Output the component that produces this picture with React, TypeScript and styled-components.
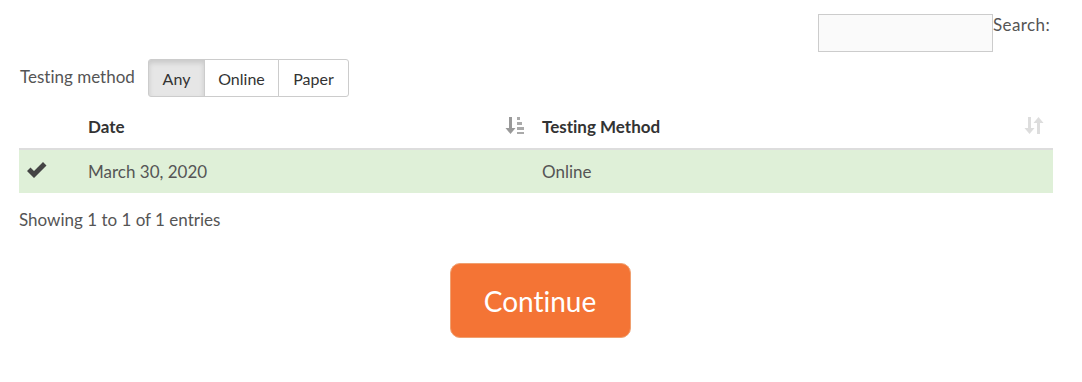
import styled, { createGlobalStyle } from "styled-components"

const GlobalStyle = createGlobalStyle`
  html, body {
    margin: 0;
    padding: 0;
    background: #fff;
  }
  body {
    font-family: 'Lato', 'Open Sans', sans-serif;
    font-size: 17px;
    color: #555;
    font-variant-ligatures: none;
  }
  button, input {
    font-variant-ligatures: none;
  }
`

const Page = styled.div`
  padding: 14px 29px 0 19px;
`

const SearchRow = styled.div`
  display: flex;
  justify-content: flex-end;
  align-items: flex-start;
`

const SearchInput = styled.input`
  width: 175px;
  height: 38px;
  box-sizing: border-box;
  border: 1px solid #ccc;
  background: #fafafa;
  margin: 0;
`

const SearchLabel = styled.label`
  font-size: 17px;
  color: #555;
  margin-top: 0;
  width: 60px;
  letter-spacing: 0.4px;
`

const FilterRow = styled.div`
  display: flex;
  align-items: center;
  margin-top: 7px;
`

const FilterLabel = styled.span`
  font-size: 17px;
  color: #555;
  margin-top: -4px;
  margin-left: 1px;
  width: 128px;
`

const Group = styled.div`
  display: flex;
`

const GroupButton = styled.button<{ $active?: boolean; $w: number }>`
  width: ${p => p.$w}px;
  height: 38px;
  box-sizing: border-box;
  border: 1px solid #ccc;
  margin-left: -1px;
  background: ${p => (p.$active ? "#e6e6e6" : "#fff")};
  box-shadow: ${p => (p.$active ? "inset 0 3px 5px rgba(0,0,0,0.125)" : "none")};
  font-family: inherit;
  font-size: 16px;
  color: #333;
  padding: 0;
  &:first-child {
    margin-left: 0;
    border-radius: 3px 0 0 3px;
  }
  &:last-child {
    border-radius: 0 3px 3px 0;
  }
`

const Table = styled.table`
  width: 100%;
  border-collapse: collapse;
  margin-top: 8px;
`

const HeadCell = styled.th<{ $w?: string }>`
  width: ${p => p.$w ?? "auto"};
  text-align: left;
  font-weight: 700;
  font-size: 17px;
  color: #333;
  height: 43px;
  padding: 0 8px;
  border-bottom: 2px solid #ddd;
  position: relative;
`

const SortIcon = styled.span`
  position: absolute;
  right: 9px;
  top: 11px;
  display: flex;
`

const Row = styled.tr`
  background: #dff0d8;
`

const Cell = styled.td`
  height: 43px;
  padding: 0 8px;
  font-size: 17px;
  color: #555;
`

const Info = styled.div`
  margin-top: 16px;
  font-size: 17px;
  color: #555;
`

const ButtonWrap = styled.div`
  display: flex;
  justify-content: center;
  margin-top: 33px;
`

const ContinueButton = styled.button`
  width: 181px;
  height: 75px;
  border: 1px solid #f0a070;
  border-radius: 10px;
  background: #f47435;
  color: #fff;
  font-family: inherit;
  font-size: 28px;
  margin-left: 8px;
`

const SortAsc = () => (
  <svg width="20" height="20" viewBox="0 0 20 20">
    <rect x="4" y="1" width="3" height="12" fill="#999" />
    <polygon points="0.5,12 10.5,12 5.5,18" fill="#999" />
    <rect x="12" y="1" width="3" height="3" fill="#aaa" />
    <rect x="12" y="6" width="5" height="3" fill="#aaa" />
    <rect x="12" y="11" width="7" height="3" fill="#aaa" />
    <rect x="12" y="16" width="7" height="2" fill="#aaa" />
  </svg>
)

const SortBoth = () => (
  <svg width="20" height="20" viewBox="0 0 20 20">
    <rect x="4" y="1" width="3" height="12" fill="#ddd" />
    <polygon points="0.5,12 10.5,12 5.5,18" fill="#ddd" />
    <rect x="13" y="6" width="3" height="12" fill="#ddd" />
    <polygon points="9.5,7 19.5,7 14.5,1" fill="#ddd" />
  </svg>
)

const Check = () => (
  <svg width="20" height="16" viewBox="0 0 20 16">
    <polygon points="0,9 3.5,5.5 7,9 16,0 19.5,3.5 7,16" fill="#444" />
  </svg>
)

export default function App() {
  return (
    <>
      <GlobalStyle />
      <Page>
        <SearchRow>
          <SearchInput aria-label="Search" />
          <SearchLabel>Search:</SearchLabel>
        </SearchRow>
        <FilterRow>
          <FilterLabel>Testing method</FilterLabel>
          <Group>
            <GroupButton $active $w={57}>Any</GroupButton>
            <GroupButton $w={75}>Online</GroupButton>
            <GroupButton $w={71}>Paper</GroupButton>
          </Group>
        </FilterRow>
        <Table>
          <thead>
            <tr>
              <HeadCell $w="45px" />
              <HeadCell $w="438px">
                Date
                <SortIcon><SortAsc /></SortIcon>
              </HeadCell>
              <HeadCell>
                Testing Method
                <SortIcon><SortBoth /></SortIcon>
              </HeadCell>
            </tr>
          </thead>
          <tbody>
            <Row>
              <Cell><Check /></Cell>
              <Cell>March 30, 2020</Cell>
              <Cell>Online</Cell>
            </Row>
          </tbody>
        </Table>
        <Info>Showing 1 to 1 of 1 entries</Info>
        <ButtonWrap>
          <ContinueButton>Continue</ContinueButton>
        </ButtonWrap>
      </Page>
    </>
  )
}
